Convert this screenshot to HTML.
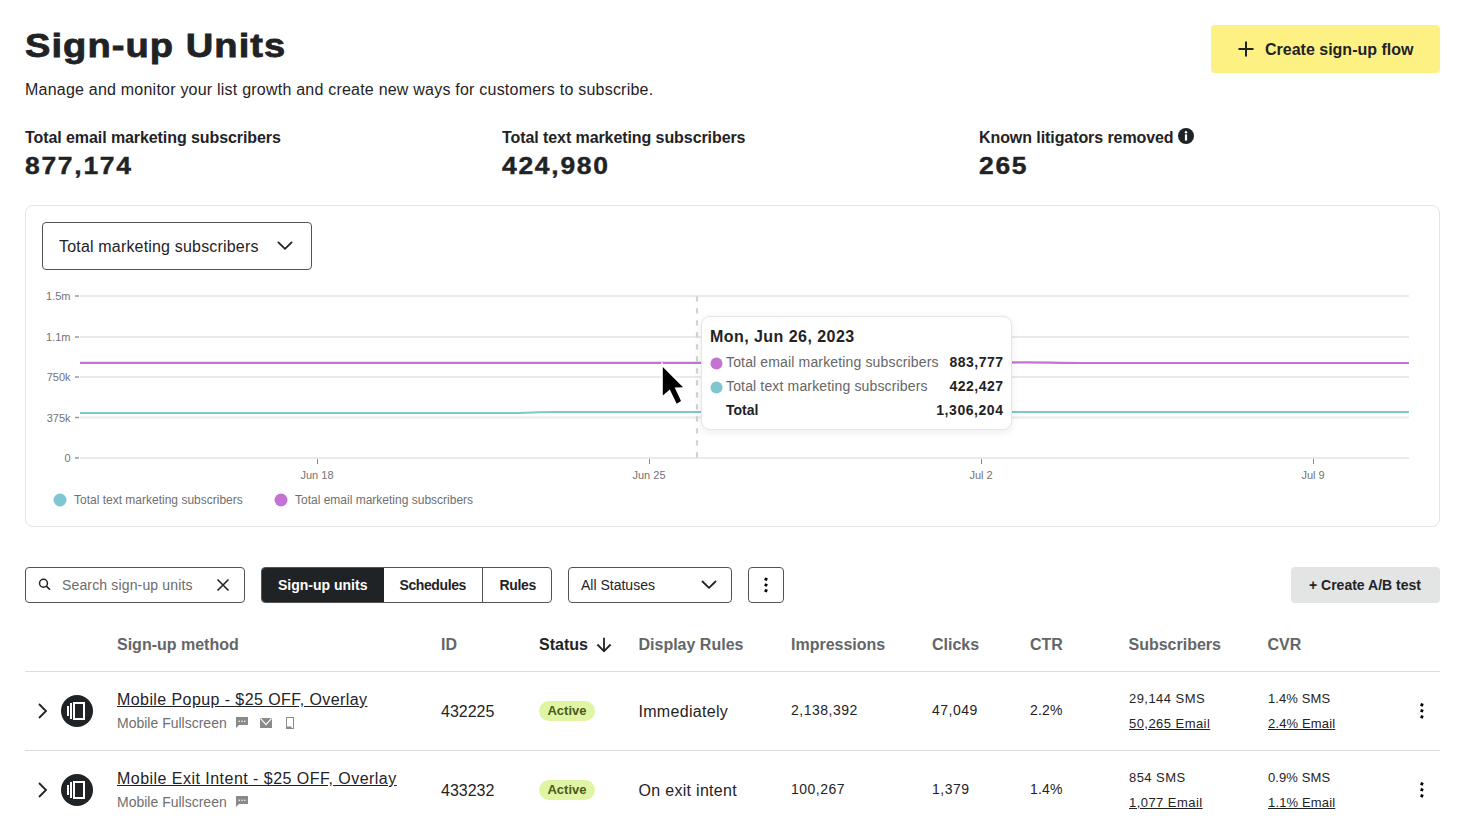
<!DOCTYPE html>
<html>
<head>
<meta charset="utf-8">
<style>
*{box-sizing:border-box;margin:0;padding:0}
html,body{width:1465px;height:835px;overflow:hidden;background:#fff}
body{position:relative;font-family:"Liberation Sans",sans-serif;color:#1f2326}
.a{position:absolute;white-space:nowrap}
.t{line-height:20px;height:20px}
.b{font-weight:700}
</style>
</head>
<body>
<!-- HEADER -->
<div class="a b" style="left:25px;top:25px;font-size:34px;line-height:40px;letter-spacing:0.95px;transform:scaleX(1.12);transform-origin:0 0;-webkit-text-stroke:0.8px #1f2326">Sign-up Units</div>
<div class="a t" style="left:25px;top:80px;font-size:16px;letter-spacing:0.22px">Manage and monitor your list growth and create new ways for customers to subscribe.</div>

<div class="a" style="left:1211px;top:25px;width:229px;height:48px;background:#fef183;border-radius:4px"></div>
<svg class="a" style="left:1237px;top:40px" width="18" height="18" viewBox="0 0 18 18"><path d="M9 1.5V16.5M1.5 9H16.5" stroke="#1f2326" stroke-width="2" fill="none"/></svg>
<div class="a t b" style="left:1265px;top:40px;font-size:16px">Create sign-up flow</div>

<!-- STATS -->
<div class="a t b" style="left:25px;top:128px;font-size:16px;letter-spacing:-0.08px">Total email marketing subscribers</div>
<div class="a b" style="left:25px;top:152px;font-size:23px;line-height:28px;letter-spacing:1.5px;transform:scaleX(1.15);transform-origin:0 0;-webkit-text-stroke:0.4px #1f2326">877,174</div>
<div class="a t b" style="left:502px;top:128px;font-size:16px;letter-spacing:-0.08px">Total text marketing subscribers</div>
<div class="a b" style="left:502px;top:152px;font-size:23px;line-height:28px;letter-spacing:1.5px;transform:scaleX(1.15);transform-origin:0 0;-webkit-text-stroke:0.4px #1f2326">424,980</div>
<div class="a t b" style="left:979px;top:128px;font-size:16px;letter-spacing:-0.08px">Known litigators removed</div>
<svg class="a" style="left:1178px;top:127.5px" width="16" height="16" viewBox="0 0 16 16"><circle cx="8" cy="8" r="8" fill="#1f2326"/><circle cx="8" cy="4.3" r="1.2" fill="#fff"/><rect x="6.9" y="6.4" width="2.2" height="6.2" fill="#fff"/></svg>
<div class="a b" style="left:979px;top:152px;font-size:23px;line-height:28px;letter-spacing:1.5px;transform:scaleX(1.15);transform-origin:0 0;-webkit-text-stroke:0.4px #1f2326">265</div>

<!-- CHART CARD -->
<div class="a" style="left:25px;top:205px;width:1415px;height:322px;border:1px solid #e2e4e5;border-radius:8px"></div>
<div class="a" style="left:42px;top:222px;width:270px;height:48px;border:1px solid #515457;border-radius:4px"></div>
<div class="a t" style="left:59px;top:237px;font-size:16px;letter-spacing:0.18px">Total marketing subscribers</div>
<svg class="a" style="left:276px;top:239px" width="18" height="14" viewBox="0 0 18 14"><path d="M2.4 3.4L9 9.9L15.6 3.4" stroke="#1f2326" stroke-width="1.8" stroke-linecap="round" stroke-linejoin="round" fill="none"/></svg>

<svg class="a" style="left:0;top:0" width="1465" height="835">
  <g stroke="#eaeaea" stroke-width="2">
    <line x1="80" y1="296" x2="1409" y2="296"/>
    <line x1="80" y1="337" x2="1409" y2="337"/>
    <line x1="80" y1="377" x2="1409" y2="377"/>
    <line x1="80" y1="417.5" x2="1409" y2="417.5"/>
    <line x1="80" y1="458" x2="1409" y2="458"/>
  </g>
  <g stroke="#999" stroke-width="1.5">
    <line x1="75" y1="296" x2="79" y2="296"/>
    <line x1="75" y1="337" x2="79" y2="337"/>
    <line x1="75" y1="377" x2="79" y2="377"/>
    <line x1="75" y1="417.5" x2="79" y2="417.5"/>
    <line x1="75" y1="458" x2="79" y2="458"/>
  </g>
  <g stroke="#888" stroke-width="1">
    <line x1="317.5" y1="459" x2="317.5" y2="464"/>
    <line x1="649.5" y1="459" x2="649.5" y2="464"/>
    <line x1="981.5" y1="459" x2="981.5" y2="464"/>
    <line x1="1313.5" y1="459" x2="1313.5" y2="464"/>
  </g>
  <line x1="697" y1="296.2" x2="697" y2="459" stroke="#d2d2d2" stroke-width="2.2" stroke-dasharray="5.3 6.7"/>
  <path d="M80 362.8 H1000 C1030 361.5 1050 363 1080 363 H1409" stroke="#c473d3" stroke-width="2.2" fill="none"/>
  <path d="M80 413 H507 C527 413 537 412 555 412 H1409" stroke="#7fc6d0" stroke-width="2.2" fill="none"/>
</svg>
<div class="a" style="left:0;top:289px;width:70.5px;text-align:right;font-size:11px;line-height:14px;color:#737373">1.5m</div>
<div class="a" style="left:0;top:330px;width:70.5px;text-align:right;font-size:11px;line-height:14px;color:#737373">1.1m</div>
<div class="a" style="left:0;top:370px;width:70.5px;text-align:right;font-size:11px;line-height:14px;color:#737373">750k</div>
<div class="a" style="left:0;top:410.5px;width:70.5px;text-align:right;font-size:11px;line-height:14px;color:#737373">375k</div>
<div class="a" style="left:0;top:451px;width:70.5px;text-align:right;font-size:11px;line-height:14px;color:#737373">0</div>
<div class="a" style="left:267px;top:468px;width:100px;text-align:center;font-size:11px;line-height:14px;color:#737373">Jun 18</div>
<div class="a" style="left:599px;top:468px;width:100px;text-align:center;font-size:11px;line-height:14px;color:#737373">Jun 25</div>
<div class="a" style="left:931px;top:468px;width:100px;text-align:center;font-size:11px;line-height:14px;color:#737373">Jul 2</div>
<div class="a" style="left:1263px;top:468px;width:100px;text-align:center;font-size:11px;line-height:14px;color:#737373">Jul 9</div>

<svg class="a" style="left:52.5px;top:493px" width="14" height="14"><circle cx="7" cy="7" r="6.5" fill="#7fc6d0"/></svg>
<div class="a" style="left:74px;top:493px;font-size:12px;line-height:14px;color:#6f6f6f">Total text marketing subscribers</div>
<svg class="a" style="left:273.5px;top:493px" width="14" height="14"><circle cx="7" cy="7" r="6.5" fill="#c473d3"/></svg>
<div class="a" style="left:295px;top:493px;font-size:12px;line-height:14px;color:#6f6f6f">Total email marketing subscribers</div>

<!-- TOOLTIP -->
<div class="a" style="left:701px;top:316px;width:311px;height:114px;background:#fff;border:1px solid #e6e6e6;border-radius:9px;box-shadow:0 2px 8px rgba(0,0,0,0.08)"></div>
<div class="a t b" style="left:710px;top:327px;font-size:16px;letter-spacing:0.45px">Mon, Jun 26, 2023</div>
<svg class="a" style="left:709.5px;top:356.5px" width="13" height="13"><circle cx="6.5" cy="6.5" r="6" fill="#c473d3"/></svg>
<div class="a t" style="left:726px;top:352px;font-size:14px;color:#666;letter-spacing:0.15px">Total email marketing subscribers</div>
<div class="a t b" style="left:900px;width:103.5px;text-align:right;top:352px;font-size:14px;letter-spacing:0.5px">883,777</div>
<svg class="a" style="left:709.5px;top:380.5px" width="13" height="13"><circle cx="6.5" cy="6.5" r="6" fill="#7fc6d0"/></svg>
<div class="a t" style="left:726px;top:376px;font-size:14px;color:#666;letter-spacing:0.15px">Total text marketing subscribers</div>
<div class="a t b" style="left:900px;width:103.5px;text-align:right;top:376px;font-size:14px;letter-spacing:0.5px">422,427</div>
<div class="a t b" style="left:726px;top:400px;font-size:14px">Total</div>
<div class="a t b" style="left:900px;width:103.5px;text-align:right;top:400px;font-size:14px;letter-spacing:0.55px">1,306,204</div>

<!-- CURSOR -->
<svg class="a" style="left:0;top:0" width="1465" height="835">
  <path d="M661.3 361.8 L661.3 398.8 L669.3 392.3 L676 406 L683.2 402.2 L676.8 389 L686.3 388.6 Z" fill="#fff"/>
  <path d="M662.8 366.9 L662.8 395.5 L669.8 389.6 L676.7 403.7 L681 401.1 L674.7 387.6 L683 387.3 Z" fill="#000" stroke="#fff" stroke-width="2.8" stroke-linejoin="miter" stroke-miterlimit="10" paint-order="stroke"/>
</svg>

<!-- TOOLBAR -->
<div class="a" style="left:25px;top:567px;width:220px;height:36px;border:1px solid #515457;border-radius:4px"></div>
<svg class="a" style="left:38px;top:578px" width="14" height="14" viewBox="0 0 14 14"><circle cx="5.5" cy="5.2" r="3.95" stroke="#1f2326" stroke-width="1.5" fill="none"/><path d="M8.4 8.1L12 11.8" stroke="#1f2326" stroke-width="1.6"/></svg>
<div class="a t" style="left:62px;top:575px;font-size:14px;color:#6b6b6b;letter-spacing:0.15px">Search sign-up units</div>
<svg class="a" style="left:216px;top:578px" width="14" height="14" viewBox="0 0 14 14"><path d="M1.5 1.5L12.5 12.5M12.5 1.5L1.5 12.5" stroke="#1f2326" stroke-width="1.6"/></svg>

<div class="a" style="left:261px;top:567px;width:291px;height:36px;border:1px solid #515457;border-radius:4px;overflow:hidden">
  <div class="a" style="left:0;top:0;width:122px;height:34px;background:#1f2326"></div>
  <div class="a" style="left:220px;top:0;width:1px;height:34px;background:#515457"></div>
</div>
<div class="a t b" style="left:278px;top:575px;font-size:14px;color:#fff">Sign-up units</div>
<div class="a t b" style="left:399.5px;top:575px;font-size:14px;letter-spacing:-0.4px">Schedules</div>
<div class="a t b" style="left:499.5px;top:575px;font-size:14px;letter-spacing:-0.35px">Rules</div>

<div class="a" style="left:568px;top:567px;width:164px;height:36px;border:1px solid #515457;border-radius:4px"></div>
<div class="a t" style="left:581px;top:575px;font-size:14px">All Statuses</div>
<svg class="a" style="left:700px;top:578px" width="18" height="14" viewBox="0 0 18 14"><path d="M2.5 3.5L9 9.9L15.5 3.5" stroke="#1f2326" stroke-width="1.8" stroke-linecap="round" stroke-linejoin="round" fill="none"/></svg>

<div class="a" style="left:748px;top:567px;width:36px;height:36px;border:1px solid #515457;border-radius:4px"></div>
<svg class="a" style="left:762px;top:575px" width="8" height="20"><rect x="2.6" y="2.8000000000000003" width="2.8" height="2.8" fill="#000" transform="rotate(20 4 4.2)"/><rect x="2.6" y="8.6" width="2.8" height="2.8" fill="#000" transform="rotate(20 4 10)"/><rect x="2.6" y="14.299999999999999" width="2.8" height="2.8" fill="#000" transform="rotate(20 4 15.7)"/></svg>

<div class="a" style="left:1291px;top:567px;width:149px;height:36px;background:#e3e4e4;border-radius:4px"></div>
<div class="a t b" style="left:1309px;top:575px;font-size:14px">+ Create A/B test</div>

<!-- TABLE HEADER -->
<div class="a t b" style="left:117px;top:635px;font-size:16px;color:#636669">Sign-up method</div>
<div class="a t b" style="left:441px;top:635px;font-size:16px;color:#636669">ID</div>
<div class="a t b" style="left:539px;top:635px;font-size:16px">Status</div>
<svg class="a" style="left:595px;top:636px" width="18" height="18" viewBox="0 0 18 18"><path d="M9 1.8V15.2M2.4 8.5L9 15.3L15.6 8.5" stroke="#1f2326" stroke-width="1.8" fill="none"/></svg>
<div class="a t b" style="left:638.5px;top:635px;font-size:16px;color:#636669">Display Rules</div>
<div class="a t b" style="left:791px;top:635px;font-size:16px;color:#636669">Impressions</div>
<div class="a t b" style="left:932px;top:635px;font-size:16px;color:#636669">Clicks</div>
<div class="a t b" style="left:1030px;top:635px;font-size:16px;color:#636669">CTR</div>
<div class="a t b" style="left:1128.5px;top:635px;font-size:16px;color:#636669">Subscribers</div>
<div class="a t b" style="left:1267.5px;top:635px;font-size:16px;color:#636669">CVR</div>
<div class="a" style="left:25px;top:671px;width:1415px;height:1px;background:#dcdcdc"></div>

<!-- ROW 1 -->
<svg class="a" style="left:36px;top:702px" width="14" height="18" viewBox="0 0 14 18"><path d="M3 2L10 9L3 16" stroke="#1f2326" stroke-width="1.8" fill="none"/></svg>
<svg class="a" style="left:61px;top:695px" width="32" height="32" viewBox="0 0 32 32"><circle cx="16" cy="16" r="16" fill="#1f2326"/><rect x="6" y="11" width="2" height="10" fill="#fff"/><rect x="9" y="8" width="2" height="16" fill="#fff"/><rect x="13" y="8" width="10" height="16" fill="none" stroke="#fff" stroke-width="2"/></svg>
<div class="a t" style="left:117px;top:690px;font-size:16px;letter-spacing:0.42px;text-decoration:underline">Mobile Popup - $25 OFF, Overlay</div>
<div class="a t" style="left:117px;top:713px;font-size:14px;color:#6f6f6f">Mobile Fullscreen</div>
<svg class="a" style="left:236px;top:717px" width="12" height="11" viewBox="0 0 12 11"><path d="M0 0H12V8H3L0 11Z" fill="#8a8a8a"/><circle cx="3.2" cy="4.3" r="0.8" fill="#fff"/><circle cx="6" cy="4.3" r="0.8" fill="#fff"/><circle cx="8.8" cy="4.3" r="0.8" fill="#fff"/></svg>
<svg class="a" style="left:260px;top:718px" width="12" height="10" viewBox="0 0 12 10"><path d="M0 0H12V10H0Z" fill="#8a8a8a"/><path d="M0.4 0.4L6 6.7L11.6 0.4" stroke="#fff" stroke-width="1.1" fill="none"/></svg>
<svg class="a" style="left:286px;top:717px" width="8" height="12" viewBox="0 0 8 12"><rect x="0.5" y="0.5" width="7" height="11" fill="none" stroke="#8a8a8a" stroke-width="1"/><rect x="0.5" y="9.5" width="5" height="2" fill="#8a8a8a"/></svg>
<div class="a t" style="left:441px;top:702px;font-size:16px">432225</div>
<div class="a" style="left:539px;top:701px;width:56px;height:20px;background:#e0f5a3;border-radius:10px"></div>
<div class="a b" style="left:539px;top:701px;width:56px;height:20px;line-height:20px;text-align:center;font-size:13px;color:#4a5a1c">Active</div>
<div class="a t" style="left:638.5px;top:702px;font-size:16px;letter-spacing:0.3px">Immediately</div>
<div class="a t" style="left:791px;top:700px;font-size:14px;letter-spacing:0.5px">2,138,392</div>
<div class="a t" style="left:932px;top:700px;font-size:14px;letter-spacing:0.5px">47,049</div>
<div class="a t" style="left:1030px;top:700px;font-size:14px;letter-spacing:0.2px">2.2%</div>
<div class="a t" style="left:1129px;top:689px;font-size:13px;letter-spacing:0.45px">29,144 SMS</div>
<div class="a t" style="left:1129px;top:714px;font-size:13px;letter-spacing:0.45px;text-decoration:underline">50,265 Email</div>
<div class="a t" style="left:1268px;top:689px;font-size:13px;letter-spacing:0.1px">1.4% SMS</div>
<div class="a t" style="left:1268px;top:714px;font-size:13px;letter-spacing:0.15px;text-decoration:underline">2.4% Email</div>
<svg class="a" style="left:1418px;top:701px" width="8" height="20"><rect x="2.5" y="2.5" width="2.8" height="2.8" fill="#000" transform="rotate(20 3.9 3.9)"/><rect x="2.5" y="8.4" width="2.8" height="2.8" fill="#000" transform="rotate(20 3.9 9.8)"/><rect x="2.5" y="14.5" width="2.8" height="2.8" fill="#000" transform="rotate(20 3.9 15.9)"/></svg>
<div class="a" style="left:25px;top:750px;width:1415px;height:1px;background:#dcdcdc"></div>

<!-- ROW 2 -->
<svg class="a" style="left:36px;top:781px" width="14" height="18" viewBox="0 0 14 18"><path d="M3 2L10 9L3 16" stroke="#1f2326" stroke-width="1.8" fill="none"/></svg>
<svg class="a" style="left:61px;top:774px" width="32" height="32" viewBox="0 0 32 32"><circle cx="16" cy="16" r="16" fill="#1f2326"/><rect x="6" y="11" width="2" height="10" fill="#fff"/><rect x="9" y="8" width="2" height="16" fill="#fff"/><rect x="13" y="8" width="10" height="16" fill="none" stroke="#fff" stroke-width="2"/></svg>
<div class="a t" style="left:117px;top:769px;font-size:16px;letter-spacing:0.47px;text-decoration:underline">Mobile Exit Intent - $25 OFF, Overlay</div>
<div class="a t" style="left:117px;top:792px;font-size:14px;color:#6f6f6f">Mobile Fullscreen</div>
<svg class="a" style="left:236px;top:796px" width="12" height="11" viewBox="0 0 12 11"><path d="M0 0H12V8H3L0 11Z" fill="#8a8a8a"/><circle cx="3.2" cy="4.3" r="0.8" fill="#fff"/><circle cx="6" cy="4.3" r="0.8" fill="#fff"/><circle cx="8.8" cy="4.3" r="0.8" fill="#fff"/></svg>
<div class="a t" style="left:441px;top:781px;font-size:16px">433232</div>
<div class="a" style="left:539px;top:780px;width:56px;height:20px;background:#e0f5a3;border-radius:10px"></div>
<div class="a b" style="left:539px;top:780px;width:56px;height:20px;line-height:20px;text-align:center;font-size:13px;color:#4a5a1c">Active</div>
<div class="a t" style="left:638.5px;top:781px;font-size:16px;letter-spacing:0.3px">On exit intent</div>
<div class="a t" style="left:791px;top:779px;font-size:14px;letter-spacing:0.5px">100,267</div>
<div class="a t" style="left:932px;top:779px;font-size:14px;letter-spacing:0.5px">1,379</div>
<div class="a t" style="left:1030px;top:779px;font-size:14px;letter-spacing:0.2px">1.4%</div>
<div class="a t" style="left:1129px;top:768px;font-size:13px;letter-spacing:0.45px">854 SMS</div>
<div class="a t" style="left:1129px;top:793px;font-size:13px;letter-spacing:0.45px;text-decoration:underline">1,077 Email</div>
<div class="a t" style="left:1268px;top:768px;font-size:13px;letter-spacing:0.1px">0.9% SMS</div>
<div class="a t" style="left:1268px;top:793px;font-size:13px;letter-spacing:0.15px;text-decoration:underline">1.1% Email</div>
<svg class="a" style="left:1418px;top:780px" width="8" height="20"><rect x="2.5" y="2.5" width="2.8" height="2.8" fill="#000" transform="rotate(20 3.9 3.9)"/><rect x="2.5" y="8.4" width="2.8" height="2.8" fill="#000" transform="rotate(20 3.9 9.8)"/><rect x="2.5" y="14.5" width="2.8" height="2.8" fill="#000" transform="rotate(20 3.9 15.9)"/></svg>
</body>
</html>
